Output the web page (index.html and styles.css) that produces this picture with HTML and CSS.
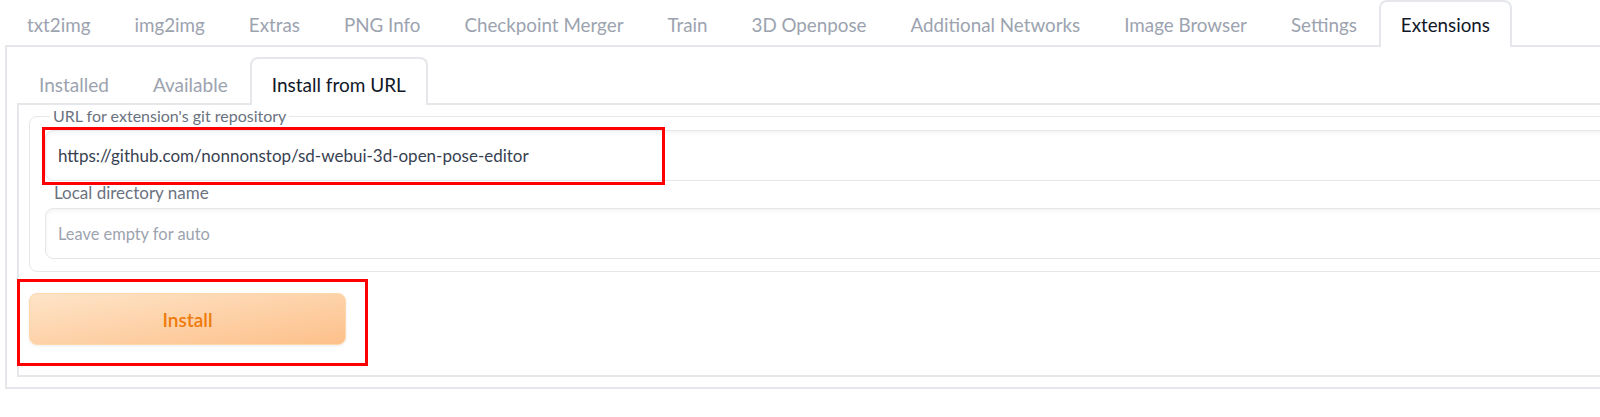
FILE: index.html
```html
<!DOCTYPE html>
<html lang="en">
<head>
	<meta charset="UTF-8">
	<title>Extensions</title>
	<link rel="stylesheet" href="styles.css">
</head>
<body>
	<div class="tabs">
		<nav class="tab-nav">
			<button class="tab">txt2img</button>
			<button class="tab">img2img</button>
			<button class="tab">Extras</button>
			<button class="tab">PNG Info</button>
			<button class="tab">Checkpoint Merger</button>
			<button class="tab">Train</button>
			<button class="tab">3D Openpose</button>
			<button class="tab">Additional Networks</button>
			<button class="tab">Image Browser</button>
			<button class="tab">Settings</button>
			<button class="tab selected">Extensions</button>
		</nav>
		<div class="tab-panel">
			<nav class="tab-nav sub">
				<button class="tab">Installed</button>
				<button class="tab">Available</button>
				<button class="tab selected">Install from URL</button>
			</nav>
			<div class="tab-panel sub">
				<fieldset class="form">
					<legend>URL for extension's git repository</legend>
					<div class="field">
						<input class="input" type="text" value="https://github.com/nonnonstop/sd-webui-3d-open-pose-editor">
						<span class="mark mark-url"></span>
					</div>
					<label class="label">Local directory name</label>
					<input class="input" type="text" placeholder="Leave empty for auto">
				</fieldset>
				<div class="actions">
					<button class="btn-install">Install</button>
					<span class="mark mark-btn"></span>
				</div>
			</div>
		</div>
	</div>
</body>
</html>
```

FILE: styles.css
```css
body {
	background: #fff;
	font-family: Lato, "Liberation Sans", sans-serif;
	margin: 0;
	overflow: hidden;
}

/* tabs */
.tabs {
	margin-left: 5px;
	width: 1700px;
}
.tab-nav {
	display: flex;
	height: 45px;
}
.tab {
	background: none;
	border: 2px solid transparent;
	border-bottom: none;
	border-radius: 8px 8px 0 0;
	color: #9ca3af;
	font: 18.8px Lato, "Liberation Sans", sans-serif;
	height: 47px;
	line-height: 43px;
	padding: 0 20px;
	position: relative;
	z-index: 1;
}
.tab.selected {
	background: #fff;
	border-color: #e5e7eb;
	color: #111827;
}
.tab-panel {
	border: 2px solid #e5e7eb;
	padding: 10px;
}

/* sub tabs */
.tab-nav.sub {
	height: 46px;
}
.tab-nav.sub .tab {
	font-size: 19px;
	height: 48px;
	line-height: 45px;
	padding-top: 3px;
}
.tab-panel.sub {
	padding: 0 10px 30px;
}

/* form */
fieldset.form {
	border: 1px solid #e5e7eb;
	border-radius: 8px;
	margin: 0;
	min-width: 0;
	padding: 0 15px 12px;
}
fieldset.form legend {
	color: #6b7280;
	font-size: 16px;
	line-height: 22px;
	margin-left: 5px;
	padding: 0 3px;
}
.field {
	margin-top: 3px;
	position: relative;
}
.label {
	color: #6b7280;
	display: block;
	font-size: 17px;
	line-height: 24px;
	padding-left: 9px;
}
.input {
	background: #fff;
	border: 1px solid #e5e7eb;
	border-radius: 8px;
	box-shadow: inset 0 2px 4px rgba(0, 0, 0, 0.05);
	box-sizing: border-box;
	color: #374151;
	display: block;
	font: 17px Lato, "Liberation Sans", sans-serif;
	height: 51px;
	margin-top: 3px;
	padding: 0 12px;
	width: 100%;
}
.field .input {
	margin-top: 0;
}
.input::placeholder {
	color: #9ca3af;
	font-size: 16.4px;
}

/* install */
.actions {
	margin-top: 21px;
	position: relative;
	width: 317px;
}
.btn-install {
	background: linear-gradient(to bottom right, #fee4c8, #fdc08a);
	border: 1px solid #fed7aa;
	border-radius: 8px;
	box-shadow: 0 1px 3px rgba(0, 0, 0, 0.08);
	color: #f07a0c;
	display: block;
	font: 600 19px Lato, "Liberation Sans", sans-serif;
	height: 52px;
	width: 317px;
}

/* red annotation boxes */
.mark {
	border: 3px solid #ff0000;
	box-sizing: border-box;
	position: absolute;
	z-index: 2;
}
.mark-url {
	height: 58px;
	left: -3px;
	top: -3px;
	width: 623px;
}
.mark-btn {
	height: 87px;
	left: -12px;
	top: -14px;
	width: 351px;
}
```
